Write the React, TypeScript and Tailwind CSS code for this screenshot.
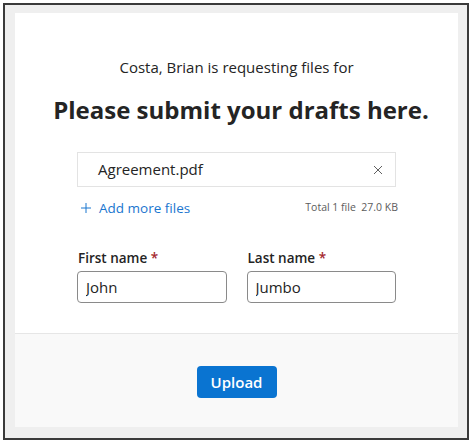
import React from 'react';

export default function App() {
  return (
    <div className="w-[474px] h-[443px] bg-white pt-[3px] pl-[3px]" style={{ fontFamily: '"Open Sans", "Noto Sans", sans-serif' }}>
      <div className="w-[466px] h-[437px] border-2 border-[#3a3a3a] bg-[#efefef] pl-[10px] pr-[9px] pt-[8px] pb-[11px]">
        <div className="h-full flex flex-col bg-white">
          {/* Request body */}
          <div className="flex flex-col px-[62px] pt-[44px] pb-[30px] text-[#242424]">
            <p className="text-center text-[15px] leading-[20px]">Costa, Brian is requesting files for</p>
            <h1 className="mt-[17px] text-center text-[24px] leading-[32px] font-bold whitespace-nowrap -mx-[40px] pl-[9px]">
              Please submit your drafts here.
            </h1>

            <div className="mt-[26px] h-[35px] flex items-center justify-between border border-[#e3e3e3] pl-[20px] pr-[12px]">
              <span className="text-[15px]">Agreement.pdf</span>
              <svg width="10" height="10" viewBox="0 0 10 10" className="text-[#616161]">
                <path d="M1 1 L9 9 M9 1 L1 9" stroke="currentColor" strokeWidth="1" />
              </svg>
            </div>

            <div className="mt-[11px] h-[20px] flex items-center justify-between">
              <button className="flex items-center gap-[8px] text-[#1a76cf] text-[13.5px] pl-[4px]">
                <svg width="10" height="10" viewBox="0 0 10 10">
                  <path d="M5 0 V10 M0 5 H10" stroke="currentColor" strokeWidth="1" />
                </svg>
                <span>Add more files</span>
              </button>
              <span className="text-[10.5px] text-[#5c5c5c] mr-[-2px]">Total 1 file&nbsp; 27.0 KB</span>
            </div>

            <div className="mt-[30px] grid grid-cols-2 gap-x-[20px]">
              <div className="flex flex-col">
                <label className="text-[13.5px] leading-[20px] font-semibold pl-[1px]">
                  First name <span className="text-[#a4262c]">*</span>
                </label>
                <input
                  className="mt-[3px] h-[32px] w-full rounded-[4px] border border-[#8a8a8a] px-[8px] text-[15px] text-[#242424] outline-none"
                  defaultValue="John"
                />
              </div>
              <div className="flex flex-col">
                <label className="text-[13.5px] leading-[20px] font-semibold pl-[1px]">
                  Last name <span className="text-[#a4262c]">*</span>
                </label>
                <input
                  className="mt-[3px] h-[32px] w-full rounded-[4px] border border-[#8a8a8a] px-[8px] text-[15px] text-[#242424] outline-none"
                  defaultValue="Jumbo"
                />
              </div>
            </div>
          </div>

          {/* Footer */}
          <div className="flex-1 flex items-center justify-center border-t border-[#e6e6e6] bg-[#f9f9f9] pt-[3px]">
            <button className="w-[80px] h-[32px] rounded-[4px] bg-[#0a74d1] text-white text-[15px] font-semibold">
              Upload
            </button>
          </div>
        </div>
      </div>
    </div>
  );
}
